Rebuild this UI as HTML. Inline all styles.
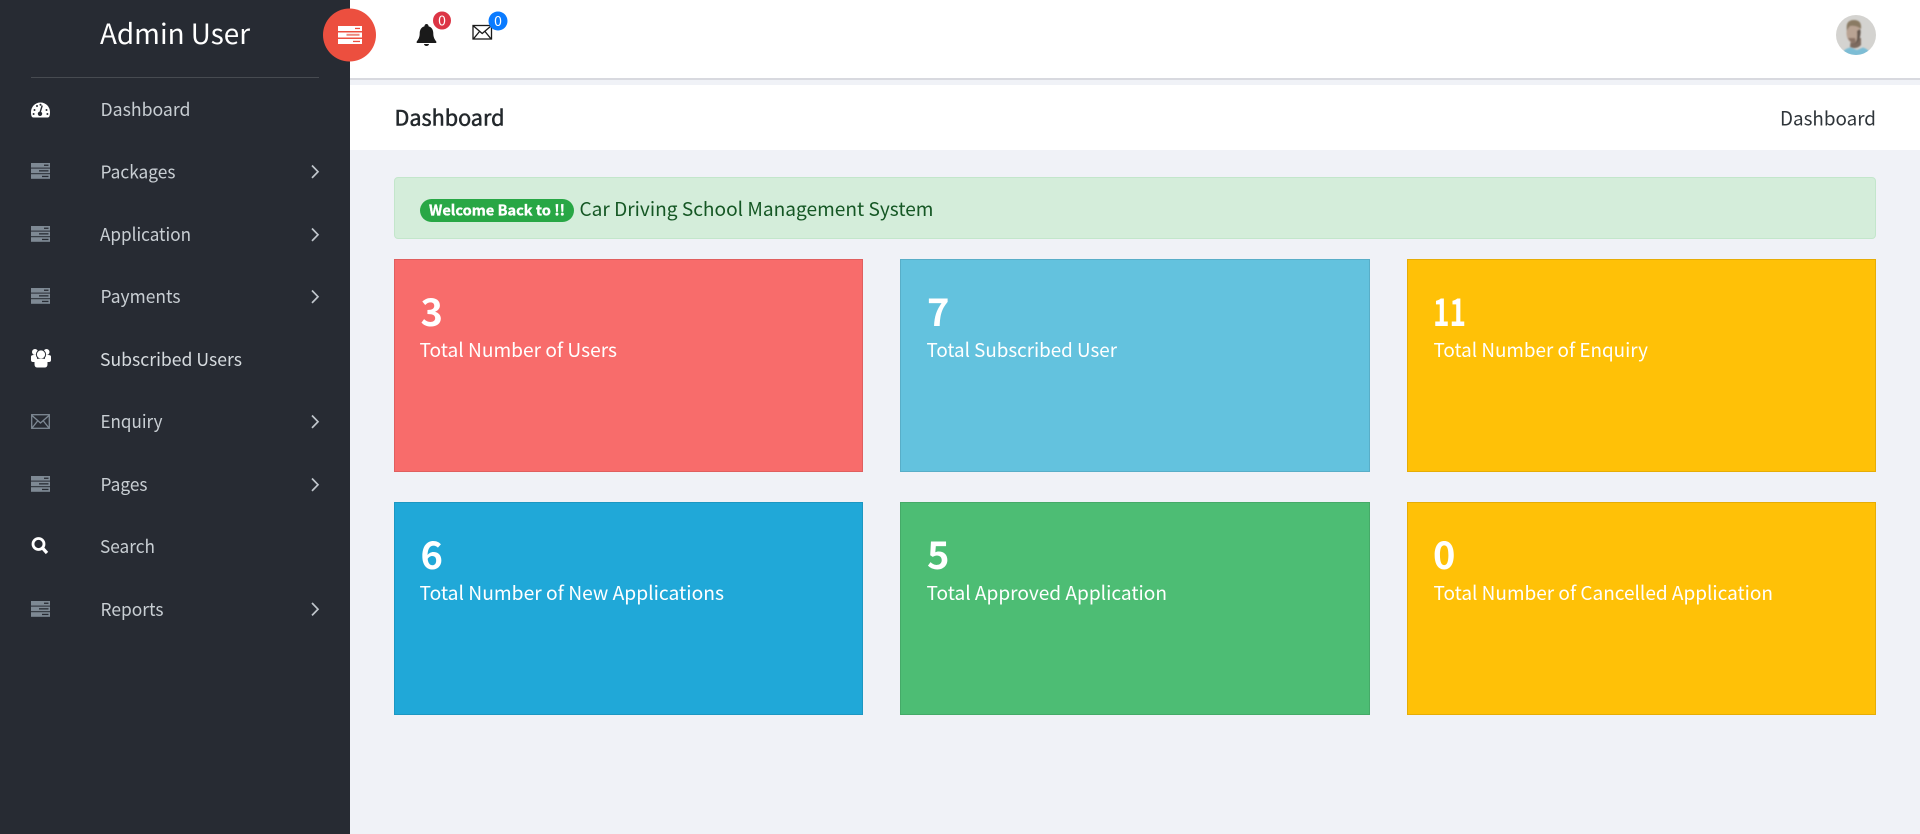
<!DOCTYPE html>
<html lang="en">
<head>
<meta charset="utf-8">
<title>Dashboard</title>
<style>
html,body{margin:0;padding:0;width:1920px;height:834px;overflow:hidden;background:#f0f2f7}
.box{position:absolute;box-sizing:border-box}
#side{left:0;top:0;width:350px;height:834px;background:#272b33}
#top{left:350px;top:0;width:1570px;height:80px;background:#fff;border-bottom:2px solid #d8d9df}
#head{left:350px;top:85px;width:1570px;height:65px;background:#fff}
#alert{left:394px;top:177px;width:1482px;height:62px;background:#d4edda;border:1px solid #c3e6cb;border-radius:4px}
#badge{left:420px;top:199px;width:154px;height:23px;background:#28a745;border-radius:12px}
.card{width:469px;height:213px;border:1px solid}
svg{position:absolute;left:0;top:0}
text{font-family:"Noto Sans CJK JP","Liberation Sans",sans-serif}
.n{fill:#c8ced3;font-size:18px}
.l{fill:#fff;font-size:19px}
.v{fill:#fff;font-size:38px;font-weight:700}
</style>
</head>
<body>
<div class="box" id="side"></div>
<div class="box" id="top"></div>
<div class="box" id="head"></div>
<div class="box" id="alert"></div>
<div class="box" id="badge"></div>
<div class="box card" style="left:394px;top:259px;background:#f86c6b;border-color:#e05f5f"></div>
<div class="box card" style="left:900px;top:259px;width:470px;background:#63c2de;border-color:#58aec8"></div>
<div class="box card" style="left:1407px;top:259px;background:#ffc107;border-color:#e6ad06"></div>
<div class="box card" style="left:394px;top:502px;background:#20a8d8;border-color:#1c97c2"></div>
<div class="box card" style="left:900px;top:502px;width:470px;background:#4dbd74;border-color:#45aa68"></div>
<div class="box card" style="left:1407px;top:502px;background:#ffc107;border-color:#e6ad06"></div>

<svg width="1920" height="834" viewBox="0 0 1920 834" xmlns="http://www.w3.org/2000/svg">
<defs>
<g id="srv">
<rect x="0" y="0" width="19" height="4.6" fill="currentColor"/><rect x="13" y="1.6" width="4.5" height="1.3" fill="#272b33"/>
<rect x="0" y="5.6" width="19" height="4.6" fill="currentColor"/><rect x="8" y="7.2" width="9.5" height="1.3" fill="#272b33"/>
<rect x="0" y="11.2" width="19" height="4.6" fill="currentColor"/><rect x="11" y="12.8" width="6.5" height="1.3" fill="#272b33"/>
</g>
<path id="chev" d="M0 0L6 6.2L0 12.4" fill="none" stroke="#c0c6cc" stroke-width="1.7"/>
<filter id="soft" x="-10%" y="-10%" width="120%" height="120%"><feGaussianBlur stdDeviation="0.9"/></filter>
</defs>

<!-- sidebar -->
<rect x="31" y="77" width="288" height="1" fill="#474b51"/>
<text x="100" y="44" fill="#fff" font-size="28" textLength="150" lengthAdjust="spacingAndGlyphs">Admin User</text>
<text class="n" x="100.5" y="116" textLength="90" lengthAdjust="spacingAndGlyphs">Dashboard</text>
<text class="n" x="100.5" y="178.5" textLength="75" lengthAdjust="spacingAndGlyphs">Packages</text>
<text class="n" x="100" y="241" textLength="91" lengthAdjust="spacingAndGlyphs">Application</text>
<text class="n" x="100.5" y="303" textLength="80" lengthAdjust="spacingAndGlyphs">Payments</text>
<text class="n" x="100" y="366" textLength="142" lengthAdjust="spacingAndGlyphs" style="fill:#d6dbdf">Subscribed Users</text>
<text class="n" x="100.5" y="428" textLength="62" lengthAdjust="spacingAndGlyphs">Enquiry</text>
<text class="n" x="100.5" y="491" textLength="47" lengthAdjust="spacingAndGlyphs">Pages</text>
<text class="n" x="100" y="553" textLength="55" lengthAdjust="spacingAndGlyphs">Search</text>
<text class="n" x="100.5" y="616" textLength="63" lengthAdjust="spacingAndGlyphs">Reports</text>

<!-- sidebar icons -->
<path d="M33 117.5Q31 117.5 31 112A9.5 9.5 0 0 1 50 112Q50 117.5 48 117.5Z" fill="#fff"/>
<path d="M42.2 105.500L40.200 112" stroke="#272b33" stroke-width="1.400"/><circle cx="40" cy="113.800" r="2.200" fill="#272b33"/>
<circle cx="34.500" cy="110" r="1" fill="#272b33"/><circle cx="37" cy="106" r="1" fill="#272b33"/><circle cx="46.500" cy="110" r="1" fill="#272b33"/><circle cx="40.500" cy="104.800" r="1" fill="#272b33"/><circle cx="33.600" cy="114" r="1" fill="#272b33"/><circle cx="47.400" cy="114" r="1" fill="#272b33"/>
<g color="#7e8994">
<use href="#srv" x="31" y="163"/>
<use href="#srv" x="31" y="226"/>
<use href="#srv" x="31" y="288"/>
<use href="#srv" x="31" y="476"/>
<use href="#srv" x="31" y="601"/>
</g>
<g fill="#fff">
<circle cx="35" cy="352" r="3"/><circle cx="46.500" cy="352" r="3"/><path d="M31 356.500Q31 355 34 355H37V362H33Q31 362 31 360Z"/><path d="M51 356.500Q51 355 48 355H45V362H49Q51 362 51 360Z"/>
<circle cx="41" cy="354.500" r="4.600" stroke="#272b33"/><path d="M34.500 364V362Q34.500 358.800 38 358.800H44Q47.500 358.800 47.500 362V364Q47.500 367.500 45 367.500H37Q34.500 367.500 34.500 364Z"/>
</g>
<g fill="none" stroke="#7e8994" stroke-width="1.300"><rect x="31.700" y="414.700" width="17.600" height="13.600"/><path d="M32 415.500L40.500 423L49 415.500M32 428L38 420.500M49 428L43 420.500"/></g>
<g fill="none" stroke="#fff"><circle cx="38.500" cy="544" r="5.500" stroke-width="2.800"/><path d="M42.500 548L47 553" stroke-width="3.200"/></g>

<use href="#chev" x="312" y="165.500"/>
<use href="#chev" x="312" y="228.500"/>
<use href="#chev" x="312" y="290.500"/>
<use href="#chev" x="312" y="415.500"/>
<use href="#chev" x="312" y="478.500"/>
<use href="#chev" x="312" y="603"/>

<!-- toggle -->
<circle cx="349.500" cy="35" r="26.500" fill="#ec4f3f"/>
<g><rect x="338" y="26" width="24" height="5" fill="#fff"/><rect x="338" y="32.500" width="24" height="5" fill="#fff"/><rect x="338" y="39" width="24" height="5" fill="#fff"/>
<rect x="355" y="27.800" width="5" height="1.300" fill="#ec4f3f"/><rect x="346.500" y="33.800" width="13" height="2" fill="#ec8a7e"/><rect x="353" y="40.800" width="7" height="1.300" fill="#ec4f3f"/></g>

<!-- bell -->
<path d="M426.500 24a2 2 0 0 1 2 2.300c3.300 1 4.800 3.700 4.800 7.200c0 3.500 1.300 6 3 8v1.500h-19.600V41.500c1.700-2 3-4.500 3-8c0-3.500 1.500-6.200 4.800-7.200a2 2 0 0 1 2-2.300Z" fill="#1a1a1a"/>
<path d="M424 44h5a2.500 2 0 0 1-5 0Z" fill="#1a1a1a"/>
<circle cx="442" cy="20.500" r="9" fill="#dc3545"/>
<text x="442" y="25.500" fill="#fff" font-size="14" text-anchor="middle">0</text>
<!-- mail -->
<g fill="none" stroke="#1a1a1a" stroke-width="1.300"><rect x="473" y="25.500" width="18.500" height="13.500"/><path d="M473.500 26L482.200 33.500L491 26M473.500 38.800L479.500 31.500M491 38.800L485 31.500"/></g>
<circle cx="498" cy="21" r="9.500" fill="#0a7bff"/>
<text x="498" y="26" fill="#fff" font-size="14" text-anchor="middle">0</text>

<!-- avatar -->
<clipPath id="av"><circle cx="1856" cy="35" r="20"/></clipPath>
<g clip-path="url(#av)">
<rect x="1836" y="15" width="40" height="40" fill="#d4d3d0"/>
<g filter="url(#soft)">
<path d="M1841 56Q1843 49 1850 47.500L1857 50L1863 47.500Q1869 49 1872 56Z" fill="#7dbdd5"/>
<path d="M1850 47L1851 38H1861L1861 45Q1856 50 1850 47Z" fill="#7d6a5e"/>
<ellipse cx="1853.500" cy="33" rx="7" ry="10" fill="#b9a393"/>
<path d="M1847 31Q1845 20 1854 20Q1862 20 1861 29Q1856 25 1850 26Q1848 28 1847 31Z" fill="#8a7a63"/>
<path d="M1857 31Q1858 42 1854 44Q1859 44 1860.500 34Q1861 31 1860 29Z" fill="#655850"/>
<path d="M1848 38Q1851 44 1856 43L1855 38Z" fill="#8b7568"/>
</g>
</g>

<!-- header -->
<text x="394.500" y="125.500" fill="#23282c" font-size="21" stroke="#23282c" stroke-width=".5" textLength="110" lengthAdjust="spacingAndGlyphs">Dashboard</text>
<text x="1780" y="125.500" fill="#2f353a" font-size="19.500" textLength="96" lengthAdjust="spacingAndGlyphs">Dashboard</text>

<!-- alert -->
<text x="429" y="215.500" fill="#fff" font-size="14.500" font-weight="700" stroke="#fff" stroke-width=".3" textLength="136" lengthAdjust="spacingAndGlyphs">Welcome Back to !!</text>
<text x="579.500" y="216" fill="#155724" font-size="19" textLength="354" lengthAdjust="spacingAndGlyphs">Car Driving School Management System</text>

<!-- cards -->
<text class="v" x="420.500" y="326">3</text>
<text class="l" x="419.500" y="357" textLength="197.500" lengthAdjust="spacingAndGlyphs">Total Number of Users</text>
<text class="v" x="927" y="326">7</text>
<text class="l" x="926.500" y="357" textLength="190.500" lengthAdjust="spacingAndGlyphs">Total Subscribed User</text>
<text class="v" x="1433" y="326" textLength="33" lengthAdjust="spacingAndGlyphs">11</text>
<text class="l" x="1433.500" y="357" textLength="214.500" lengthAdjust="spacingAndGlyphs">Total Number of Enquiry</text>
<text class="v" x="420.500" y="569">6</text>
<text class="l" x="419.500" y="600" textLength="304.500" lengthAdjust="spacingAndGlyphs">Total Number of New Applications</text>
<text class="v" x="927" y="569">5</text>
<text class="l" x="926.500" y="600" textLength="240.500" lengthAdjust="spacingAndGlyphs">Total Approved Application</text>
<text class="v" x="1433" y="569">0</text>
<text class="l" x="1433.500" y="600" textLength="339.500" lengthAdjust="spacingAndGlyphs">Total Number of Cancelled Application</text>
</svg>
</body>
</html>
